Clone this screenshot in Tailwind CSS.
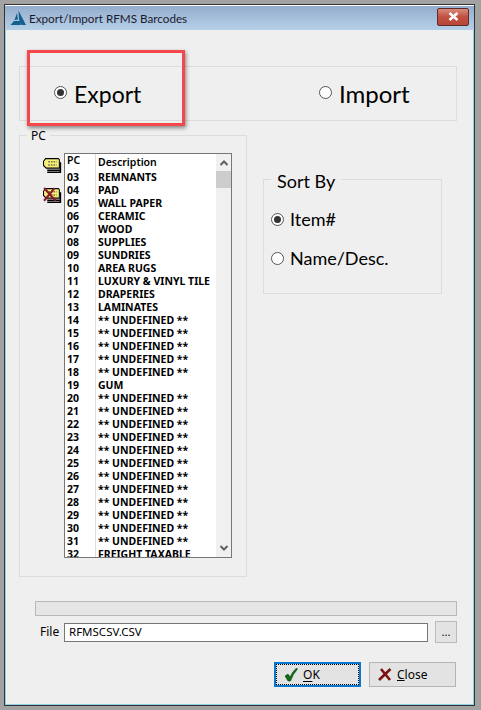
<!DOCTYPE html>
<html>
<head>
<meta charset="utf-8">
<script src="https://cdn.jsdelivr.net/npm/@tailwindcss/browser@4"></script>
</head>
<body class="m-0">
<div class="relative w-[481px] h-[710px] bg-[#a2a2a2] pt-[4px] pl-[4px] pr-[6px] pb-[4px] overflow-hidden font-['Noto_Sans',sans-serif] text-black">
  <div class="h-full flex flex-col border border-[#333] bg-[#8fd0e8]">
    <div class="h-[25px] shrink-0 border-t border-t-white bg-gradient-to-b from-[#93adcc] to-[#b7d0e9] flex items-center pl-[5px] pr-[5px]">
      <svg class="w-[16px] h-[16px] shrink-0" viewBox="0 0 16 16"><path d="M8.500 0.500 L16 15 L11.500 15 L9 9.500 Z M7 3 L8 9.500 L4.500 10 L7 3 Z M4 11 L10 11 L11 15 L0.500 15 Z" fill="#14608f"/></svg>
      <span class="ml-[3px] font-['Lato',sans-serif] text-[11.700px] leading-[16px] text-[#1a1a2e] whitespace-nowrap">Export/Import RFMS Barcodes</span>
      <div class="ml-auto mb-[3px] w-[32px] h-[18px] rounded-[2px] border border-[#5e2a2a] bg-gradient-to-b from-[#d88a7c] via-[#c0503f] to-[#b8453a] flex items-center justify-center">
        <svg class="w-[11px] h-[9px]" viewBox="0 0 11 9"><path d="M1.500 1 L9.500 8 M9.500 1 L1.500 8" stroke="#fff" stroke-width="2.600"/></svg>
      </div>
    </div>
    <div class="relative flex-1 ml-[1px] mr-[1px] mb-[1px] bg-[#efefef] pl-[13px] pt-[36px]">
      <div class="w-[438px] h-[55px] border border-[#dcdcdc] flex items-center">
        <span class="ml-[34px] w-[13px] h-[13px] rounded-full border border-[#555] bg-white flex items-center justify-center mb-[2px]"><span class="w-[7px] h-[7px] rounded-full bg-[#333]"></span></span>
        <span class="ml-[7px] w-[245px] font-['Lato',sans-serif] text-[23px] leading-[30px] whitespace-nowrap">Export</span>
        <span class="w-[13px] h-[13px] rounded-full border border-[#555] bg-white mb-[2px]"></span>
        <span class="ml-[7px] font-['Lato',sans-serif] text-[24px] leading-[30px] whitespace-nowrap">Import</span>
      </div>
      <div class="flex mt-[14px]">
        <div class="relative w-[228px] h-[442px] border border-[#dcdcdc] flex">
          <span class="absolute left-[7px] top-[-8px] bg-[#efefef] px-[4px] text-[12px] leading-[15px]">PC</span>
          <div class="w-[44px] shrink-0 flex flex-col items-start pl-[23px] pt-[22px] gap-[14px]">
            <svg class="w-[19px] h-[16px] shrink-0 overflow-visible" viewBox="0 0 18 15"><path d="M4 11.500H17M4 13.500H17M16.500 4V14" stroke="#000" stroke-width="1.400" fill="none"/><path d="M0.500 3 L2.500 0.500 H14.500 L15.500 1.500 V9.500 H3 L0.500 7 Z" fill="#f7ef7c" stroke="#000"/><path d="M5 3.500h8M5 6.500h8" stroke="#6f6f3a" stroke-width="1.500" stroke-dasharray="1.500 1"/></svg>
            <svg class="w-[19px] h-[16px] shrink-0 overflow-visible" viewBox="0 0 18 15"><path d="M4 11.500H17M4 13.500H17M16.500 4V14" stroke="#000" stroke-width="1.400" fill="none"/><path d="M0.500 3 L2.500 0.500 H14.500 L15.500 1.500 V9.500 H3 L0.500 7 Z" fill="#f7ef7c" stroke="#000"/><path d="M5 3.500h8M5 6.500h8" stroke="#6f6f3a" stroke-width="1.500" stroke-dasharray="1.500 1"/><path d="M1 0 L12 12 M11 0 L1 12" stroke="#8b1a2a" stroke-width="2"/></svg>
          </div>
          <div class="mt-[17px] w-[168px] h-[405px] border border-[#777] bg-white flex overflow-hidden">
            <div class="w-[151px] shrink-0 h-full overflow-hidden text-[10.500px] leading-[13px] font-bold">
              <div class="flex h-[17px] font-semibold items-center"><span class="w-[31px] pl-[2px] border-r border-[#ddd] h-full">PC</span><span class="pl-[2px]">Description</span></div>
              <div class="flex flex-col relative">
                <div class="flex"><span class="w-[31px] pl-[2px] border-r border-[#ddd]">03</span><span class="pl-[2px] whitespace-nowrap">REMNANTS</span></div>
                <div class="flex"><span class="w-[31px] pl-[2px] border-r border-[#ddd]">04</span><span class="pl-[2px] whitespace-nowrap">PAD</span></div>
                <div class="flex"><span class="w-[31px] pl-[2px] border-r border-[#ddd]">05</span><span class="pl-[2px] whitespace-nowrap">WALL PAPER</span></div>
                <div class="flex"><span class="w-[31px] pl-[2px] border-r border-[#ddd]">06</span><span class="pl-[2px] whitespace-nowrap">CERAMIC</span></div>
                <div class="flex"><span class="w-[31px] pl-[2px] border-r border-[#ddd]">07</span><span class="pl-[2px] whitespace-nowrap">WOOD</span></div>
                <div class="flex"><span class="w-[31px] pl-[2px] border-r border-[#ddd]">08</span><span class="pl-[2px] whitespace-nowrap">SUPPLIES</span></div>
                <div class="flex"><span class="w-[31px] pl-[2px] border-r border-[#ddd]">09</span><span class="pl-[2px] whitespace-nowrap">SUNDRIES</span></div>
                <div class="flex"><span class="w-[31px] pl-[2px] border-r border-[#ddd]">10</span><span class="pl-[2px] whitespace-nowrap">AREA RUGS</span></div>
                <div class="flex"><span class="w-[31px] pl-[2px] border-r border-[#ddd]">11</span><span class="pl-[2px] whitespace-nowrap">LUXURY &amp; VINYL TILE</span></div>
                <div class="flex"><span class="w-[31px] pl-[2px] border-r border-[#ddd]">12</span><span class="pl-[2px] whitespace-nowrap">DRAPERIES</span></div>
                <div class="flex"><span class="w-[31px] pl-[2px] border-r border-[#ddd]">13</span><span class="pl-[2px] whitespace-nowrap">LAMINATES</span></div>
                <div class="flex"><span class="w-[31px] pl-[2px] border-r border-[#ddd]">14</span><span class="pl-[2px] whitespace-nowrap">** UNDEFINED **</span></div>
                <div class="flex"><span class="w-[31px] pl-[2px] border-r border-[#ddd]">15</span><span class="pl-[2px] whitespace-nowrap">** UNDEFINED **</span></div>
                <div class="flex"><span class="w-[31px] pl-[2px] border-r border-[#ddd]">16</span><span class="pl-[2px] whitespace-nowrap">** UNDEFINED **</span></div>
                <div class="flex"><span class="w-[31px] pl-[2px] border-r border-[#ddd]">17</span><span class="pl-[2px] whitespace-nowrap">** UNDEFINED **</span></div>
                <div class="flex"><span class="w-[31px] pl-[2px] border-r border-[#ddd]">18</span><span class="pl-[2px] whitespace-nowrap">** UNDEFINED **</span></div>
                <div class="flex"><span class="w-[31px] pl-[2px] border-r border-[#ddd]">19</span><span class="pl-[2px] whitespace-nowrap">GUM</span></div>
                <div class="flex"><span class="w-[31px] pl-[2px] border-r border-[#ddd]">20</span><span class="pl-[2px] whitespace-nowrap">** UNDEFINED **</span></div>
                <div class="flex"><span class="w-[31px] pl-[2px] border-r border-[#ddd]">21</span><span class="pl-[2px] whitespace-nowrap">** UNDEFINED **</span></div>
                <div class="flex"><span class="w-[31px] pl-[2px] border-r border-[#ddd]">22</span><span class="pl-[2px] whitespace-nowrap">** UNDEFINED **</span></div>
                <div class="flex"><span class="w-[31px] pl-[2px] border-r border-[#ddd]">23</span><span class="pl-[2px] whitespace-nowrap">** UNDEFINED **</span></div>
                <div class="flex"><span class="w-[31px] pl-[2px] border-r border-[#ddd]">24</span><span class="pl-[2px] whitespace-nowrap">** UNDEFINED **</span></div>
                <div class="flex"><span class="w-[31px] pl-[2px] border-r border-[#ddd]">25</span><span class="pl-[2px] whitespace-nowrap">** UNDEFINED **</span></div>
                <div class="flex"><span class="w-[31px] pl-[2px] border-r border-[#ddd]">26</span><span class="pl-[2px] whitespace-nowrap">** UNDEFINED **</span></div>
                <div class="flex"><span class="w-[31px] pl-[2px] border-r border-[#ddd]">27</span><span class="pl-[2px] whitespace-nowrap">** UNDEFINED **</span></div>
                <div class="flex"><span class="w-[31px] pl-[2px] border-r border-[#ddd]">28</span><span class="pl-[2px] whitespace-nowrap">** UNDEFINED **</span></div>
                <div class="flex"><span class="w-[31px] pl-[2px] border-r border-[#ddd]">29</span><span class="pl-[2px] whitespace-nowrap">** UNDEFINED **</span></div>
                <div class="flex"><span class="w-[31px] pl-[2px] border-r border-[#ddd]">30</span><span class="pl-[2px] whitespace-nowrap">** UNDEFINED **</span></div>
                <div class="flex"><span class="w-[31px] pl-[2px] border-r border-[#ddd]">31</span><span class="pl-[2px] whitespace-nowrap">** UNDEFINED **</span></div>
                <div class="flex"><span class="w-[31px] pl-[2px] border-r border-[#ddd]">32</span><span class="pl-[2px] whitespace-nowrap">FREIGHT TAXABLE</span></div>
              </div>
            </div>
            <div class="w-[16px] h-full shrink-0 bg-[#f0f0f0] flex flex-col items-center">
              <svg class="w-[16px] h-[17px] shrink-0" viewBox="0 0 16 17"><path d="M4.500 11 L8 7.500 L11.500 11" fill="none" stroke="#606060" stroke-width="2"/></svg>
              <div class="w-[15px] h-[17px] bg-[#cdcdcd] mr-[1px]"></div>
              <svg class="w-[16px] h-[17px] shrink-0 mt-auto" viewBox="0 0 16 17"><path d="M4.500 6 L8 9.500 L11.500 6" fill="none" stroke="#606060" stroke-width="2"/></svg>
            </div>
          </div>
        </div>
        <div class="relative ml-[16px] mt-[44px] w-[179px] h-[115px] border border-[#dcdcdc] flex flex-col">
          <span class="absolute left-[7px] top-[-8px] bg-[#efefef] px-[6px] font-['Lato',sans-serif] text-[18px] leading-[18px] whitespace-nowrap">Sort By</span>
          <div class="flex items-center mt-[28px] ml-[7px]">
            <span class="w-[13px] h-[13px] rounded-full border border-[#555] bg-white flex items-center justify-center"><span class="w-[7px] h-[7px] rounded-full bg-[#333]"></span></span>
            <span class="ml-[6px] font-['Lato',sans-serif] text-[18px] leading-[22px]">Item#</span>
          </div>
          <div class="flex items-center mt-[17px] ml-[7px]">
            <span class="w-[13px] h-[13px] rounded-full border border-[#555] bg-white"></span>
            <span class="ml-[6px] font-['Lato',sans-serif] text-[18px] leading-[22px] whitespace-nowrap">Name/Desc.</span>
          </div>
        </div>
      </div>
      <div class="ml-[16px] mt-[24px] w-[422px] h-[15px] border border-[#b8b8b8] bg-[#e5e5e5]"></div>
      <div class="flex items-center mt-[5px] ml-[21px]">
        <span class="text-[12px] leading-[16px] w-[24px]">File</span>
        <div class="w-[364px] h-[19px] border border-[#777] bg-white flex items-center pl-[4px] text-[11.500px]">RFMSCSV.CSV</div>
        <div class="ml-[7px] w-[22px] h-[22px] border border-[#bbb] bg-[#e3e3e3] flex items-center justify-center text-[11px] leading-[14px]">...</div>
      </div>
      <div class="flex justify-end gap-[8px] mt-[19px] pr-[17px]">
        <div class="w-[87px] h-[25px] border-2 border-[#0a78d0] bg-[#e3e3e3] flex items-center">
          <div class="w-full h-full border border-dotted border-black flex items-center pl-[7px]">
            <svg class="w-[14px] h-[15px] shrink-0" viewBox="0 0 14 15"><path d="M1 9 L4 7 L6 10 Q8 5 12.500 1 L13.500 2 Q9 7 6.500 14 L4 14 Z" fill="#0d6b12" stroke="#063b08" stroke-width="0.500"/></svg>
            <span class="ml-[5px] text-[12px] leading-[16px] underline-offset-2"><span class="underline">O</span>K</span>
          </div>
        </div>
        <div class="w-[87px] h-[25px] border border-[#b5b5b5] bg-[#e3e3e3] flex items-center pl-[8px]">
          <svg class="w-[14px] h-[13px] shrink-0" viewBox="0 0 14 13"><path d="M3 1 L12 12 M12.500 1 L1 12" stroke="#7a1010" stroke-width="2.600" fill="none"/></svg>
          <span class="ml-[5px] text-[12px] leading-[16px]"><span class="underline">C</span>lose</span>
        </div>
      </div>
    </div>
  </div>
  <div class="absolute left-[27px] top-[50px] w-[158px] h-[76px] border-[3px] border-[#f5484d] shadow-[1px_2px_4px_rgba(0,0,0,0.45)]"></div>
</div>
</body>
</html>
